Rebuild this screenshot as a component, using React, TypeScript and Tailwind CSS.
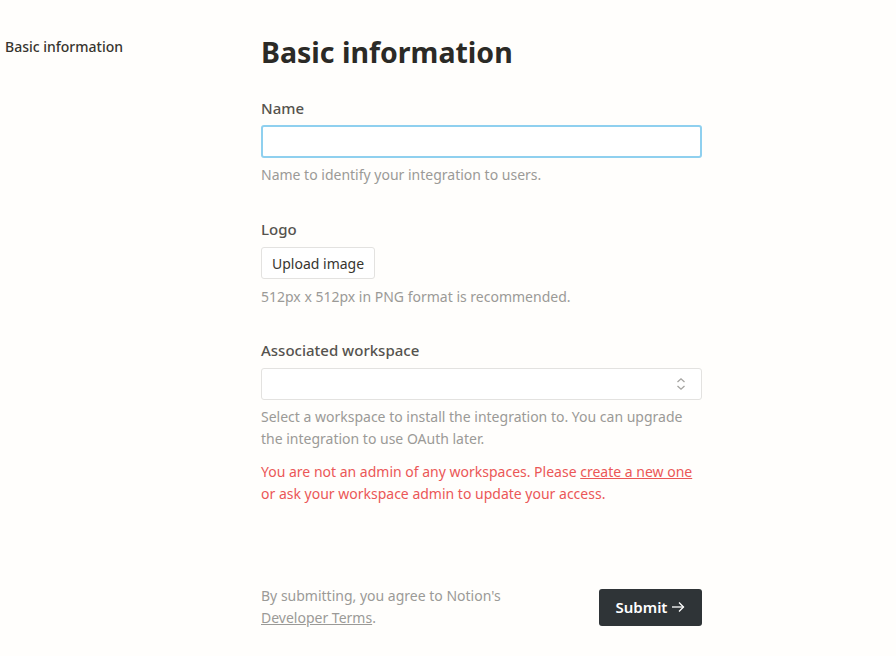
import React from "react";

export default function App() {
  return (
    <div
      className="min-h-[656px] w-[896px] bg-[#fffefc] text-[#37352f] flex"
      style={{ fontFamily: '"Noto Sans", "Open Sans", sans-serif' }}
    >
      <div className="w-[261px] shrink-0 pl-[5px] pt-[37px]">
        <div className="text-[14px] font-medium leading-[20px]">Basic information</div>
      </div>
      <div className="w-[441px] flex flex-col pt-[32px]">
        <h1 className="text-[28.5px] font-bold leading-[40px] text-[#2b2a26]">Basic information</h1>

        <div className="mt-[25px] text-[15px] font-medium leading-[22px] text-[#55534e]">Name</div>
        <div className="mt-[6px] h-[33px] rounded-[3px] border-2 border-[#8fd0ef] bg-white"></div>
        <div className="mt-[6px] text-[14px] leading-[22px] text-[#9b9a97]">
          Name to identify your integration to users.
        </div>

        <div className="mt-[32px] text-[15px] font-medium leading-[22px] text-[#55534e]">Logo</div>
        <div className="mt-[7px] flex">
          <button className="h-[32px] px-[10px] rounded-[3px] border border-[#e3e2e0] bg-white text-[14px] text-[#37352f]">
            Upload image
          </button>
        </div>
        <div className="mt-[7px] text-[14px] leading-[22px] text-[#9b9a97]">
          512px x 512px in PNG format is recommended.
        </div>

        <div className="mt-[31px] text-[15px] font-medium leading-[22px] text-[#55534e]">Associated workspace</div>
        <div className="mt-[7px] h-[32px] rounded-[3px] border border-[#e3e2e0] bg-white flex items-center justify-end pr-[14px]">
          <svg width="12" height="14" viewBox="0 0 12 14" fill="none" stroke="#a5a4a1" strokeWidth="1.3">
            <path d="M2.5 5 L6 1.8 L9.5 5" />
            <path d="M2.5 9 L6 12.2 L9.5 9" />
          </svg>
        </div>
        <div className="mt-[6px] text-[14px] leading-[22px] text-[#9b9a97]">
          Select a workspace to install the integration to. You can upgrade the integration to use OAuth later.
        </div>
        <div className="mt-[11px] text-[14px] leading-[22px] text-[#eb5757]">
          You are not an admin of any workspaces. Please{" "}
          <span className="underline">create a new one</span> or ask your workspace admin to update your access.
        </div>

        <div className="mt-[80px] flex items-center justify-between">
          <div className="text-[14px] leading-[22px] text-[#9b9a97]">
            By submitting, you agree to Notion's
            <br />
            <span className="underline">Developer Terms</span>.
          </div>
          <button className="h-[37px] w-[103px] rounded-[3px] bg-[#2f3437] text-white text-[15px] font-semibold flex items-center justify-center gap-[4px]">
            Submit
            <svg width="14" height="12" viewBox="0 0 14 12" fill="none" stroke="white" strokeWidth="1.3">
              <path d="M1 6 H12.5" />
              <path d="M8 1.5 L12.5 6 L8 10.5" />
            </svg>
          </button>
        </div>
      </div>
    </div>
  );
}
